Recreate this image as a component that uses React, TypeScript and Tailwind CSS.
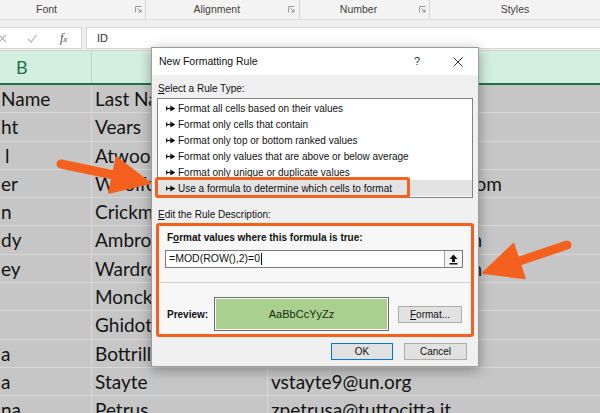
import React from "react";

const ORANGE = "#f4601e";

const Launcher = () => (
  <svg width="7" height="7" viewBox="0 0 7 7" className="shrink-0">
    <path d="M0.5 6.5 V0.5 H6.5" stroke="#9a9a9a" strokeWidth="1" fill="none" />
    <path d="M2.5 2.5 L6 6 M6 3.5 V6 H3.5" stroke="#8a8a8a" strokeWidth="1" fill="none" />
  </svg>
);

const ItemArrow = () => (
  <svg width="10" height="7" viewBox="0 0 10 7" className="shrink-0">
    <rect x="0" y="1.5" width="1.2" height="4" fill="#111" />
    <rect x="0" y="2.9" width="5" height="1.2" fill="#111" />
    <path d="M4.3 0.6 L9.4 3.5 L4.3 6.4 Z" fill="#111" />
  </svg>
);

const ruleTypes = [
  "Format all cells based on their values",
  "Format only cells that contain",
  "Format only top or bottom ranked values",
  "Format only values that are above or below average",
  "Format only unique or duplicate values",
  "Use a formula to determine which cells to format",
];

type Row = { b: string; c: string; d?: string; dw?: string; bpl?: string };

const rows: Row[] = [
  { b: "Name", c: "Last Name", d: "Email" },
  { b: "ht", c: "Vears", d: "dvears0@ox.ac.uk" },
  { b: "l", c: "Atwool", d: "gatwool1@fc2.com", bpl: "pl-[5px]" },
  { b: "er", c: "Woolford", d: "cwoolford3@hc360.com", dw: "w-[231px]" },
  { b: "n", c: "Crickmer", d: "rcrickmer4@si.edu" },
  { b: "dy", c: "Ambrosoli", d: "kambrosi5@sina.com.cn", dw: "w-[211px]" },
  { b: "ey", c: "Wardrop", d: "swardrop6@gov.cn", dw: "w-[211px]" },
  { b: "", c: "Monckton", d: "amonckton7@pbs.org" },
  { b: "", c: "Ghidotti", d: "lghidotti8@vk.com" },
  { b: "a", c: "Bottrill", d: "tbottrill9@ow.ly" },
  { b: "a", c: "Stayte", d: "vstayte9@un.org" },
  { b: "na", c: "Petrus", d: "zpetrusa@tuttocitta.it" },
];

export default function App() {
  return (
    <div
      className="relative w-[600px] h-[413px] overflow-hidden bg-[#efefef]"
      style={{ fontFamily: '"Liberation Sans", Arial, sans-serif' }}
    >
      {/* Ribbon group labels */}
      <div className="h-[20px] flex items-center bg-[#f3f3f3] border-b border-[#dcdcdc] text-[10.5px] text-[#444]">
        <div className="w-[148px] h-full flex items-center border-r border-[#d6d6d6]">
          <span className="w-[93px] text-center">Font</span>
          <span className="ml-auto mr-[3px]"><Launcher /></span>
        </div>
        <div className="w-[155px] h-full flex items-center border-r border-[#d6d6d6]">
          <span className="w-[141px] text-center">Alignment</span>
          <span className="ml-auto mr-[4px]"><Launcher /></span>
        </div>
        <div className="w-[132px] h-full flex items-center border-r border-[#d6d6d6]">
          <span className="w-[118px] text-center">Number</span>
          <span className="ml-auto mr-[3px]"><Launcher /></span>
        </div>
        <div className="flex-1 h-full flex items-center">
          <span className="w-[170px] text-center">Styles</span>
        </div>
      </div>

      {/* Formula bar */}
      <div className="mt-[7px] h-[22px] flex">
        <div className="w-[82px] h-full bg-white border border-[#d6d6d6] border-l-0 flex items-center relative">
          <svg width="9" height="9" viewBox="0 0 9 9" className="ml-[-2px]">
            <path d="M1 1 L8 8 M8 1 L1 8" stroke="#b0b0b0" strokeWidth="1.1" />
          </svg>
          <svg width="10" height="9" viewBox="0 0 10 9" className="ml-[20px]">
            <path d="M1 5 L4 8 L9.5 1" stroke="#b4b4b4" strokeWidth="1.2" fill="none" />
          </svg>
          <span
            className="ml-[23px] text-[12px] italic text-[#444]"
            style={{ fontFamily: '"Liberation Serif", serif' }}
          >
            f<span className="text-[9px]">x</span>
          </span>
        </div>
        <div className="ml-[4px] flex-1 h-full bg-white border border-[#d6d6d6] border-r-0 flex items-center pl-[10px] text-[11px] text-[#333]">
          ID
        </div>
      </div>

      {/* Sheet */}
      <div
        className="mt-[1px] border-t border-[#d4d4d4]"
        style={{ fontFamily: 'Lato, "Liberation Sans", sans-serif' }}
      >
        <div className="h-[34px] flex bg-[#d3efdf] border-b-2 border-[#217346]">
          <div className="w-[92px] border-r border-[#bcd9c7] flex items-center pl-[16px] text-[18px] text-[#217346]">
            B
          </div>
          <div className="w-[176px] border-r border-[#bcd9c7]" />
          <div className="flex-1" />
        </div>
        {rows.map((r, i) => (
          <div
            key={i}
            className="h-[28.3px] flex bg-[#c6c6c6] border-b border-[#d8d8d8] text-[19px] leading-[27px] text-[#141414] whitespace-nowrap"
          >
            <div className={`w-[92px] shrink-0 border-r border-[#d8d8d8] ${r.bpl ?? "pl-[1px]"}`}>{r.b}</div>
            <div className="w-[176px] shrink-0 border-r border-[#d8d8d8] pl-[3px] overflow-hidden">{r.c}</div>
            <div className="flex-1 pl-[3px]">
              <span className={`inline-block ${r.dw ? r.dw + " text-right" : ""}`}>{r.d}</span>
            </div>
          </div>
        ))}
      </div>

      {/* Dialog */}
      <div className="absolute left-[151px] top-[47px] w-[328px] h-[320px] bg-[#f0f0f0] border border-[#9c9c9c] shadow-[0_3px_12px_rgba(0,0,0,0.35)] flex flex-col text-[10px] text-[#111]">
        <div className="h-[27px] shrink-0 bg-white flex items-center pl-[7px] text-[10.5px]">
          <span>New Formatting Rule</span>
          <span className="ml-auto text-[11px] text-[#333]">?</span>
          <svg width="10" height="10" viewBox="0 0 10 10" className="ml-[33px] mr-[15px]">
            <path d="M0.5 0.5 L9.5 9.5 M9.5 0.5 L0.5 9.5" stroke="#333" strokeWidth="1" />
          </svg>
        </div>

        <div className="pt-[7px] pl-[6px] leading-[13px]">
          <span className="underline">S</span>elect a Rule Type:
        </div>
        <div className="mt-[3px] mx-[5px] border border-[#828282] bg-white py-[1px]">
          {ruleTypes.map((t, i) => (
            <div
              key={i}
              className={`relative h-[16px] flex items-center pl-[8px] gap-[2px] ${
                i === 5 ? "bg-[#e3e3e3]" : ""
              }`}
            >
              <ItemArrow />
              <span>{t}</span>
              {i === 5 && (
                <div
                  className="absolute left-[-3px] top-[-3px] w-[255px] h-[21px] border-[3px] rounded-[3px]"
                  style={{ borderColor: ORANGE }}
                />
              )}
            </div>
          ))}
        </div>

        <div className="mt-[10px] pl-[6px] leading-[13px]">
          <span className="underline">E</span>dit the Rule Description:
        </div>
        <div
          className="mt-[2px] mx-[4px] h-[114px] border-[3px] rounded-[3px] flex flex-col bg-[#f7f7f7]"
          style={{ borderColor: ORANGE }}
        >
          <div className="border-b border-[#d0d0d0] pb-[14px]">
            <div className="pt-[5px] pl-[8px] leading-[13px] font-bold">
              F<span className="underline">o</span>rmat values where this formula is true:
            </div>
            <div className="mt-[6px] ml-[6px] mr-[8px] h-[18px] bg-white border border-[#7a7a7a] flex items-center">
              <span className="pl-[3px] text-[10.5px]">=MOD(ROW(),2)=0</span>
              <span className="w-[1px] h-[12px] bg-[#111] ml-[1px]" />
              <div className="ml-auto w-[18px] h-full border-l border-[#a0a0a0] bg-[#f4f4f4] flex items-center justify-center">
                <svg width="9" height="11" viewBox="0 0 9 11">
                  <path d="M4.5 0.5 L8.5 5 H6 V8 H3 V5 H0.5 Z" fill="#111" />
                  <rect x="0.5" y="9" width="8" height="1.5" fill="#111" />
                </svg>
              </div>
            </div>
          </div>
          <div className="pt-[14px] pl-[8px] pr-[9px] flex items-center">
            <span className="w-[47px] font-bold">Preview:</span>
            <div className="w-[175px] h-[34px] border border-[#6a6a6a] bg-white p-[1px]">
              <div className="w-full h-full bg-[#a9d08e] flex items-center justify-center text-[11px] text-[#1c2b16]">
                AaBbCcYyZz
              </div>
            </div>
            <div className="ml-auto w-[64px] h-[17px] bg-[#e1e1e1] border border-[#adadad] flex items-center justify-center">
              <span>
                <span className="underline">F</span>ormat...
              </span>
            </div>
          </div>
        </div>

        <div className="mt-[6px] flex justify-end pr-[11px] gap-[11px]">
          <div className="w-[62px] h-[17px] bg-[#e1e1e1] border border-[#0078d7] flex items-center justify-center">
            OK
          </div>
          <div className="w-[63px] h-[17px] bg-[#e1e1e1] border border-[#adadad] flex items-center justify-center">
            Cancel
          </div>
        </div>
      </div>

      {/* Annotation arrows */}
      <svg className="absolute inset-0 pointer-events-none" width="600" height="413" viewBox="0 0 600 413">
        <line x1="61" y1="164" x2="116" y2="175.5" stroke={ORANGE} strokeWidth="9" strokeLinecap="round" />
        <path d="M150 183 L116.5 157.6 L109.1 192.8 Z" fill={ORANGE} stroke={ORANGE} strokeWidth="2" strokeLinejoin="round" />
        <line x1="567" y1="245" x2="521" y2="260.5" stroke={ORANGE} strokeWidth="9" strokeLinecap="round" />
        <path d="M483 273 L513.5 244 L524.7 278.2 Z" fill={ORANGE} stroke={ORANGE} strokeWidth="2" strokeLinejoin="round" />
      </svg>
    </div>
  );
}
